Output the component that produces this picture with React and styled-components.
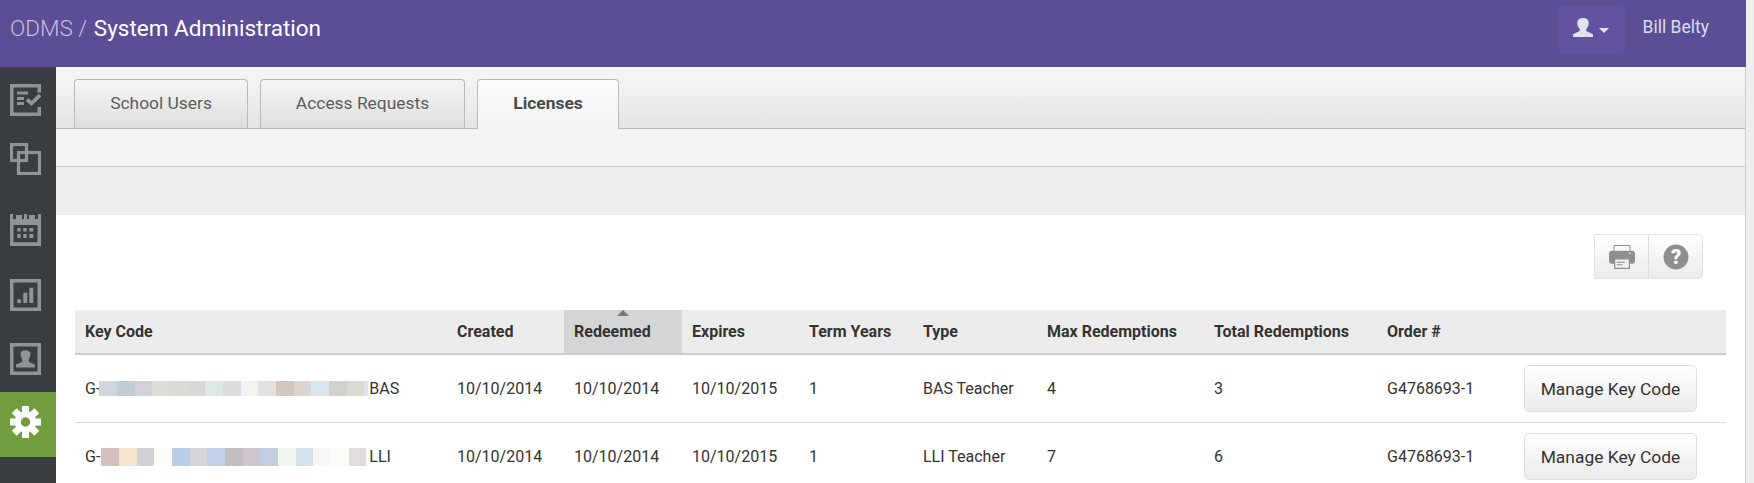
import React from "react";
import styled, { createGlobalStyle } from "styled-components";

const Global = createGlobalStyle`
  html, body { margin: 0; padding: 0; height: 483px; overflow: hidden; background: #eeeeee; }
  body { font-family: Roboto, "Liberation Sans", sans-serif; color: #333; }
`;
const Page = styled.div`width: 1754px; height: 483px; overflow: hidden; padding-right: 8px; box-sizing: border-box;`;
const Header = styled.header`
  height: 67px; background: #5b4d96; display: flex; align-items: flex-start; justify-content: space-between;
`;
const Brand = styled.div`
  margin: 14px 0 0 10px; font-size: 22.5px; line-height: 28px; font-weight: 400; color: #fff;
  span { color: #c4bedd; font-weight: 300; margin-right: 1px; }
`;
const UserArea = styled.div`display: flex; align-items: flex-start;`;
const UserButton = styled.div`
  margin-top: 6px; width: 67px; height: 47px; background: #62529f; border-radius: 5px;
  display: flex; align-items: center; justify-content: center; gap: 6px; padding-bottom: 5px; box-sizing: border-box;
`;
const Caret = styled.i`width: 0; height: 0; border: 5px solid transparent; border-top-color: #dfe3ef; border-bottom: 0; margin-top: 6px;`;
const UserName = styled.div`margin: 17px 37px 0 18px; font-size: 17.5px; line-height: 20px; color: #d8ddee; white-space: nowrap;`;
const Body = styled.div`display: flex; height: 416px;`;
const Sidebar = styled.nav`width: 56px; background: #373d40; flex: none;`;
const SideItem = styled.div`
  height: 65px; display: flex; align-items: center; justify-content: flex-start; padding: 0 0 ${p => p.$pb}px 10px; box-sizing: border-box;
  background: ${p => (p.$active ? "#709e3e" : "transparent")};
  color: ${p => (p.$active ? "#fff" : "#8f9494")};
`;
const Main = styled.main`flex: 1; min-width: 0; border-right: 1px solid #cccccc; height: 416px; overflow: hidden;`;
const TabBar = styled.div`
  height: 62px; box-sizing: border-box; padding: 12px 0 0 18px; display: flex; gap: 12px; align-items: flex-end;
  background: linear-gradient(#f7f7f7, #e4e4e4); border-bottom: 1px solid #b9b9b9;
`;
const Tab = styled.div`
  height: ${p => (p.$active ? "50px" : "49px")}; width: ${p => p.$w}px; box-sizing: border-box;
  margin-bottom: ${p => (p.$active ? "-1px" : "0")};
  border: 1px solid #b9b9b9; border-bottom: none; border-radius: 4px 4px 0 0;
  background: ${p => (p.$active ? "linear-gradient(#fbfbfb, #f3f3f3)" : "linear-gradient(#f5f5f5, #dedede)")};
  display: flex; align-items: center; justify-content: center; padding-bottom: ${p => (p.$active ? "4px" : "3px")};
  font-size: 17.4px; font-weight: ${p => (p.$active ? 700 : 400)}; color: ${p => (p.$active ? "#4a4a4a" : "#5c5c5c")};
`;
const SubBand = styled.div`height: 37px; background: #f3f3f3; border-bottom: 1px solid #c9c9c9;`;
const Spacer = styled.div`height: 48px; background: #eeeeee;`;
const Panel = styled.section`background: #fff; height: 268px; padding: 19px 18px 0 19px; box-sizing: border-box;`;
const Tools = styled.div`display: flex; justify-content: flex-end; height: 76px; padding-right: 24px;`;
const ToolGroup = styled.div`display: flex; height: 45px; box-sizing: border-box; border: 1px solid #e2e2e2; border-radius: 0 5px 5px 0; background: linear-gradient(#ffffff, #ebebeb);`;
const ToolBtn = styled.div`
  width: ${p => p.$w}px; display: flex; align-items: center; justify-content: center;
  & + & { border-left: 1px solid #dcdcdc; }
`;
const Table = styled.table`width: 1651px; border-collapse: collapse; table-layout: fixed; font-size: 16px; color: #333;`;
const Th = styled.th`
  height: 43px; padding: 0 0 0 10px; text-align: left; font-weight: 700; font-size: 16px; color: #333;
  background: ${p => (p.$sorted ? "#d5d5d5" : "#ececec")}; border-bottom: 2px solid #cccccc; position: relative;
`;
const SortArrow = styled.i`
  position: absolute; top: 0; left: 53px; width: 0; height: 0;
  border: 6.5px solid transparent; border-top: 0; border-bottom: 6px solid #777;
`;
const Td = styled.td`
  height: 67px; padding: 0 0 0 10px; font-size: 16px; border-bottom: 1px solid #dddddd; white-space: nowrap;
`;
const KeyCode = styled.div`display: flex; align-items: center; height: 20px;`;
const Blur = styled.div`display: flex; flex: none; width: 265px; margin: ${p => p.$m}; height: ${p => p.$h}px;`;
const Swatch = styled.i`flex: 1; background: ${p => p.$c};`;
const Sliver = styled.i`flex: none; width: 4px; height: 15px; background: #e4e2ec; margin-right: 1px;`;
const ManageBtn = styled.div`
  width: 173px; height: 47px; box-sizing: border-box; border: 1px solid #e0e0e0; border-radius: 5px;
  background: linear-gradient(#ffffff, #ebebeb); display: flex; align-items: center; justify-content: center;
  font-size: 17.4px; color: #333;
`;

const IconBase = ({ children }) => (
  <svg width="31" height="32" viewBox="0 0 31 32" fill="currentColor">{children}</svg>
);
const Frame = () => <path fillRule="evenodd" d="M0 0h31v32H0zM3.500 3.500v25h24v-25z" />;
const Icons = [
  <IconBase key="a">
    <path d="M0 0h31v8.500h-3.500V3.500h-24v25h24V23H31v9H0z" />
    <path d="M7 7.500h11V10.500H7zM7 13h7v3H7zM7 18h7v3H7z" />
    <path d="M17 15.500l4.500 4L30 11" fill="none" stroke="currentColor" strokeWidth="3.800" />
  </IconBase>,
  <IconBase key="b">
    <rect x="1.500" y="1.500" width="15" height="16" fill="none" stroke="currentColor" strokeWidth="3.200" />
    <rect x="8.500" y="9.500" width="21" height="21" fill="none" stroke="currentColor" strokeWidth="3.200" />
  </IconBase>,
  <IconBase key="c">
    <path fillRule="evenodd" d="M0 0h3v5h11V0h3v5h11V0h3v32H0zM3.500 11v17.300h24V11z" />
    <path d="M6 1h6v4H6zM19 1h6v4h-6z" />
    <path d="M7.300 14h3.400v3.400H7.300zM13.300 14h3.400v3.400h-3.400zM19.300 14h4v3.400h-4zM7.300 20h3.400v4H7.300zM13.300 20h3.400v4h-3.400zM19.300 20h4v4h-4z" />
  </IconBase>,
  <IconBase key="d">
    <Frame />
    <path d="M7.300 20.300H11V24H7.300zM13.300 13.700h4V24h-4zM19.300 8.700h4V24h-4z" />
  </IconBase>,
  <IconBase key="e">
    <Frame />
    <path d="M6 24.500v-3l6-2.500c.5-1 .5-2 0-3-.8-1.500-1.500-3-1.500-5 0-2.500 2-3.800 5-3.800s5 1.300 5 3.800c0 2-.7 3.500-1.500 5-.5 1-.5 2 0 3l6 2.500v3z" />
  </IconBase>,
  <IconBase key="f">
    <circle cx="15.500" cy="16" r="7.750" fill="none" stroke="currentColor" strokeWidth="6" />
    {[0, 45, 90, 135, 180, 225, 270, 315].map((a) => (
      <rect key={a} x="12" y="0" width="7" height="8" transform={`rotate(${a} 15.500 16)`} />
    ))}
  </IconBase>,
];
const iconShift = [0, 11, 0, 0, 2, 6];

const rows = [
  { suf: "BAS", type: "BAS Teacher", max: 4, total: 3, m: "0 0 0 -1px", h: 15, sliver: true,
    sw: ["#ced6de","#c0cdd6","#d5d0d8","#dedcd6","#dddad5","#d8d7d5","#dfe6e8","#d9dddf","#f4f2ee","#e4e1dc","#d2c7c2","#dad5ce","#d9e5f1","#d3d0cb","#dcd8d2"] },
  { suf: "LLI", type: "LLI Teacher", max: 7, total: 6, m: "0 3px 0 1px", h: 18,
    sw: ["#d2c1be","#f4e5cd","#d1d1d3","#fdfcf9","#b9cfe8","#d7d5dc","#c0d0e6","#c3bcc1","#cec5cd","#c2cde0","#eff4ef","#d4e0ec","#f8f7f5","#fcfdf8","#e1dddc"] },
];

export default function App() {
  return (
    <Page>
      <Global />
      <Header>
        <Brand><span>ODMS /</span> System Administration</Brand>
        <UserArea>
          <UserButton>
            <svg width="20" height="19" viewBox="0 0 21 20" fill="#dfe3ef"><path d="M0 20v-3l6.500-3c1-1 1-2 0-3-1.500-2-2-4-2-6 0-3 2-5 6-5s6 2 6 5c0 2-.5 4-2 6-1 1-1 2 0 3l6.500 3v3z" /></svg>
            <Caret />
          </UserButton>
          <UserName>Bill Belty</UserName>
        </UserArea>
      </Header>
      <Body>
        <Sidebar>
          {Icons.map((ic, i) => <SideItem key={i} $active={i === 5} $pb={iconShift[i]}>{ic}</SideItem>)}
        </Sidebar>
        <Main>
          <TabBar>
            <Tab $w={174}>School Users</Tab>
            <Tab $w={205}>Access Requests</Tab>
            <Tab $w={142} $active>Licenses</Tab>
          </TabBar>
          <SubBand />
          <Spacer />
          <Panel>
            <Tools>
              <ToolGroup>
                <ToolBtn $w={53}>
                  <svg width="26" height="24" viewBox="0 0 26 24">
                    <path d="M5 .5h16v6M5 .5v6" fill="none" stroke="#8e8e8e" strokeWidth="1" />
                    <path d="M3 5.700h20a3 3 0 0 1 3 3v7a3 3 0 0 1-3 3H3a3 3 0 0 1-3-3v-7a3 3 0 0 1 3-3z" fill="#8e8e8e" />
                    <circle cx="20.700" cy="8" r="1" fill="#dddddd" />
                    <rect x="5.600" y="13.900" width="14.800" height="9.500" fill="#f0f0f0" stroke="#8e8e8e" strokeWidth="1.200" />
                    <path d="M7.700 16.700H16v1H7.700zM7.700 19.300h5.600v1H7.700z" fill="#8e8e8e" />
                  </svg>
                </ToolBtn>
                <ToolBtn $w={53}>
                  <svg width="26" height="26" viewBox="0 0 26 26">
                    <circle cx="13" cy="13" r="12.500" fill="#8e8e8e" />
                    <text x="13" y="20" textAnchor="middle" fontFamily="Roboto, sans-serif" fontWeight="900" fontSize="20" fill="#fff">?</text>
                  </svg>
                </ToolBtn>
              </ToolGroup>
            </Tools>
            <Table>
              <colgroup>
                <col style={{ width: 372 }} /><col style={{ width: 117 }} /><col style={{ width: 118 }} /><col style={{ width: 117 }} />
                <col style={{ width: 114 }} /><col style={{ width: 124 }} /><col style={{ width: 167 }} /><col style={{ width: 173 }} />
                <col style={{ width: 137 }} /><col />
              </colgroup>
              <thead>
                <tr>
                  <Th>Key Code</Th><Th>Created</Th>
                  <Th $sorted><SortArrow />Redeemed</Th>
                  <Th>Expires</Th><Th>Term Years</Th><Th>Type</Th>
                  <Th>Max Redemptions</Th><Th>Total Redemptions</Th><Th>Order #</Th><Th />
                </tr>
              </thead>
              <tbody>
                {rows.map((r) => (
                  <tr key={r.suf}>
                    <Td>
                      <KeyCode>
                        G-
                        <Blur $m={r.m} $h={r.h}>{r.sw.map((c, i) => <Swatch key={i} $c={c} />)}</Blur>
                        {r.sliver && <Sliver />}
                        {r.suf}
                      </KeyCode>
                    </Td>
                    <Td>10/10/2014</Td><Td>10/10/2014</Td><Td>10/10/2015</Td><Td>1</Td>
                    <Td>{r.type}</Td><Td>{r.max}</Td><Td>{r.total}</Td><Td>G4768693-1</Td>
                    <Td><ManageBtn>Manage Key Code</ManageBtn></Td>
                  </tr>
                ))}
              </tbody>
            </Table>
          </Panel>
        </Main>
      </Body>
    </Page>
  );
}
